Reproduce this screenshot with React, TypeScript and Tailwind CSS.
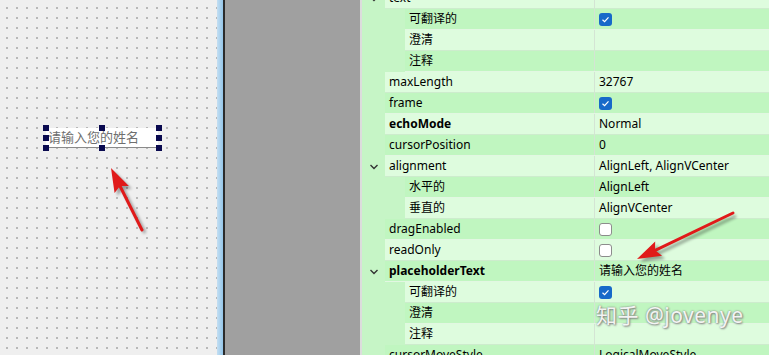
import React from "react";

type Row = {
  name: string;
  value?: string;
  check?: boolean;
  child?: boolean;
  bold?: boolean;
  expand?: boolean;
  dark: boolean;
};

const rows: Row[] = [
  { name: "text", expand: true, dark: false },
  { name: "可翻译的", check: true, child: true, dark: true },
  { name: "澄清", child: true, dark: false },
  { name: "注释", child: true, dark: true },
  { name: "maxLength", value: "32767", dark: false },
  { name: "frame", check: true, dark: true },
  { name: "echoMode", value: "Normal", bold: true, dark: false },
  { name: "cursorPosition", value: "0", dark: true },
  { name: "alignment", value: "AlignLeft, AlignVCenter", expand: true, dark: false },
  { name: "水平的", value: "AlignLeft", child: true, dark: true },
  { name: "垂直的", value: "AlignVCenter", child: true, dark: false },
  { name: "dragEnabled", check: false, dark: true },
  { name: "readOnly", check: false, dark: false },
  { name: "placeholderText", value: "请输入您的姓名", bold: true, expand: true, dark: true },
  { name: "可翻译的", check: true, child: true, dark: false },
  { name: "澄清", child: true, dark: true },
  { name: "注释", child: true, dark: false },
  { name: "cursorMoveStyle", value: "LogicalMoveStyle", dark: true },
];

const font = { fontFamily: "'Noto Sans', 'Noto Sans CJK SC', sans-serif" };

function Check({ on }: { on: boolean }) {
  if (!on)
    return <div className="w-[13px] h-[13px] rounded-[3px] border border-[#8c8c8c] bg-white" />;
  return (
    <div className="w-[13px] h-[13px] rounded-[3px] bg-[#1769c9] flex items-center justify-center">
      <svg width="9" height="9" viewBox="0 0 9 9">
        <path d="M1.5 4.8 L3.6 6.7 L7.5 2.3" fill="none" stroke="white" strokeWidth="1.2" />
      </svg>
    </div>
  );
}

function Arrow({ x1, y1, x2, y2 }: { x1: number; y1: number; x2: number; y2: number }) {
  // arrow from tail (x1,y1) to tip (x2,y2)
  const dx = x2 - x1;
  const dy = y2 - y1;
  const len = Math.hypot(dx, dy);
  const ux = dx / len;
  const uy = dy / len;
  const hl = 24;
  const hw = 8;
  const bx = x2 - ux * hl;
  const by = y2 - uy * hl;
  const pts = `${x2},${y2} ${bx - uy * hw},${by + ux * hw} ${bx + ux * 4},${by + uy * 4} ${bx + uy * hw},${by - ux * hw}`;
  return (
    <g>
      <g transform="translate(3,3)" opacity="0.35" filter="url(#blur)">
        <line x1={x1} y1={y1} x2={bx + ux * 5} y2={by + uy * 5} stroke="#000" strokeWidth="3" />
        <polygon points={pts} fill="#000" />
      </g>
      <line x1={x1} y1={y1} x2={bx + ux * 5} y2={by + uy * 5} stroke="#e01a1a" strokeWidth="3" strokeLinecap="round" />
      <polygon points={pts} fill="#e01a1a" />
    </g>
  );
}

export default function App() {
  return (
    <div className="relative w-[769px] h-[355px] overflow-hidden flex bg-[#a0a0a0]" style={font}>
      {/* form canvas */}
      <div className="w-[217px] h-full bg-[#efefef] bg-[radial-gradient(circle,#9a9a9a_0.6px,transparent_0.9px)] bg-[size:10px_10px] bg-[position:2px_3px] relative">
        <div className="absolute left-[46px] top-[128px] w-[112px] h-[20px] bg-white border-b border-[#8a8a8a] flex items-center pl-[2px]">
          <span className="text-[13px] text-[#6f6f6f] leading-none">请输入您的姓名</span>
        </div>
        {[
          [43, 125], [99, 125], [156, 125],
          [43, 135], [156, 135],
          [43, 145], [99, 145], [156, 145],
        ].map(([x, y], i) => (
          <div
            key={i}
            className="absolute w-[6px] h-[6px] bg-[#0a0a50]"
            style={{ left: x, top: y }}
          />
        ))}
      </div>
      <div className="w-[6px] h-full bg-gradient-to-r from-[#c4dff2] to-[#94c6ea]" />
      <div className="w-[2px] h-full bg-[#2b2b2b]" />
      <div className="flex-1 h-full bg-[#a0a0a0]" />
      <div className="w-[2px] h-full bg-[#dcdcdc]" />

      {/* property editor */}
      <div className="w-[407px] h-full flex flex-col -mt-[12px] text-[12px] text-black">
        {rows.map((r, i) => (
          <div key={i} className="flex h-[21px] shrink-0 bg-[#c6f5c6]">
            <div className={r.child ? "w-[43px] shrink-0" : "w-[23px] shrink-0 flex items-center pl-[7px]"}>
              {r.expand && (
                <svg width="10" height="8" viewBox="0 0 10 8">
                  <path d="M1.5 2 L5 5.5 L8.5 2" fill="none" stroke="#333" strokeWidth="1.4" />
                </svg>
              )}
            </div>
            <div
              className={
                r.dark
                  ? "flex-1 flex bg-[#c0f6c0] border-b border-[#e2f7e2]"
                  : "flex-1 flex bg-[#defcde] border-b border-[#cdeccd]"
              }
            >
              <div className={r.child ? "w-[189px] flex items-center pl-[4px]" : "w-[209px] flex items-center pl-[4px]"}>
                <span className={r.bold ? "font-bold" : ""}>{r.name}</span>
              </div>
              <div className="w-px bg-[#d4e4d4]" />
              <div className="flex-1 flex items-center pl-[4px]">
                {r.check !== undefined ? <Check on={r.check} /> : <span>{r.value}</span>}
              </div>
            </div>
          </div>
        ))}
      </div>

      {/* watermark */}
      <div
        className="absolute left-[596px] top-[305px] text-[21px] leading-none whitespace-nowrap text-white/90 tracking-[0.5px]"
        style={{ textShadow: "0 0 2px #777, 1px 1px 2px #888" }}
      >
        知乎 @jovenye
      </div>

      {/* annotation arrows */}
      <svg className="absolute inset-0 pointer-events-none" width="769" height="355">
        <defs>
          <filter id="blur">
            <feGaussianBlur stdDeviation="1.5" />
          </filter>
        </defs>
        <Arrow x1={142} y1={230} x2={111} y2={168} />
        <Arrow x1={733} y1={213} x2={637} y2={259} />
      </svg>
    </div>
  );
}
